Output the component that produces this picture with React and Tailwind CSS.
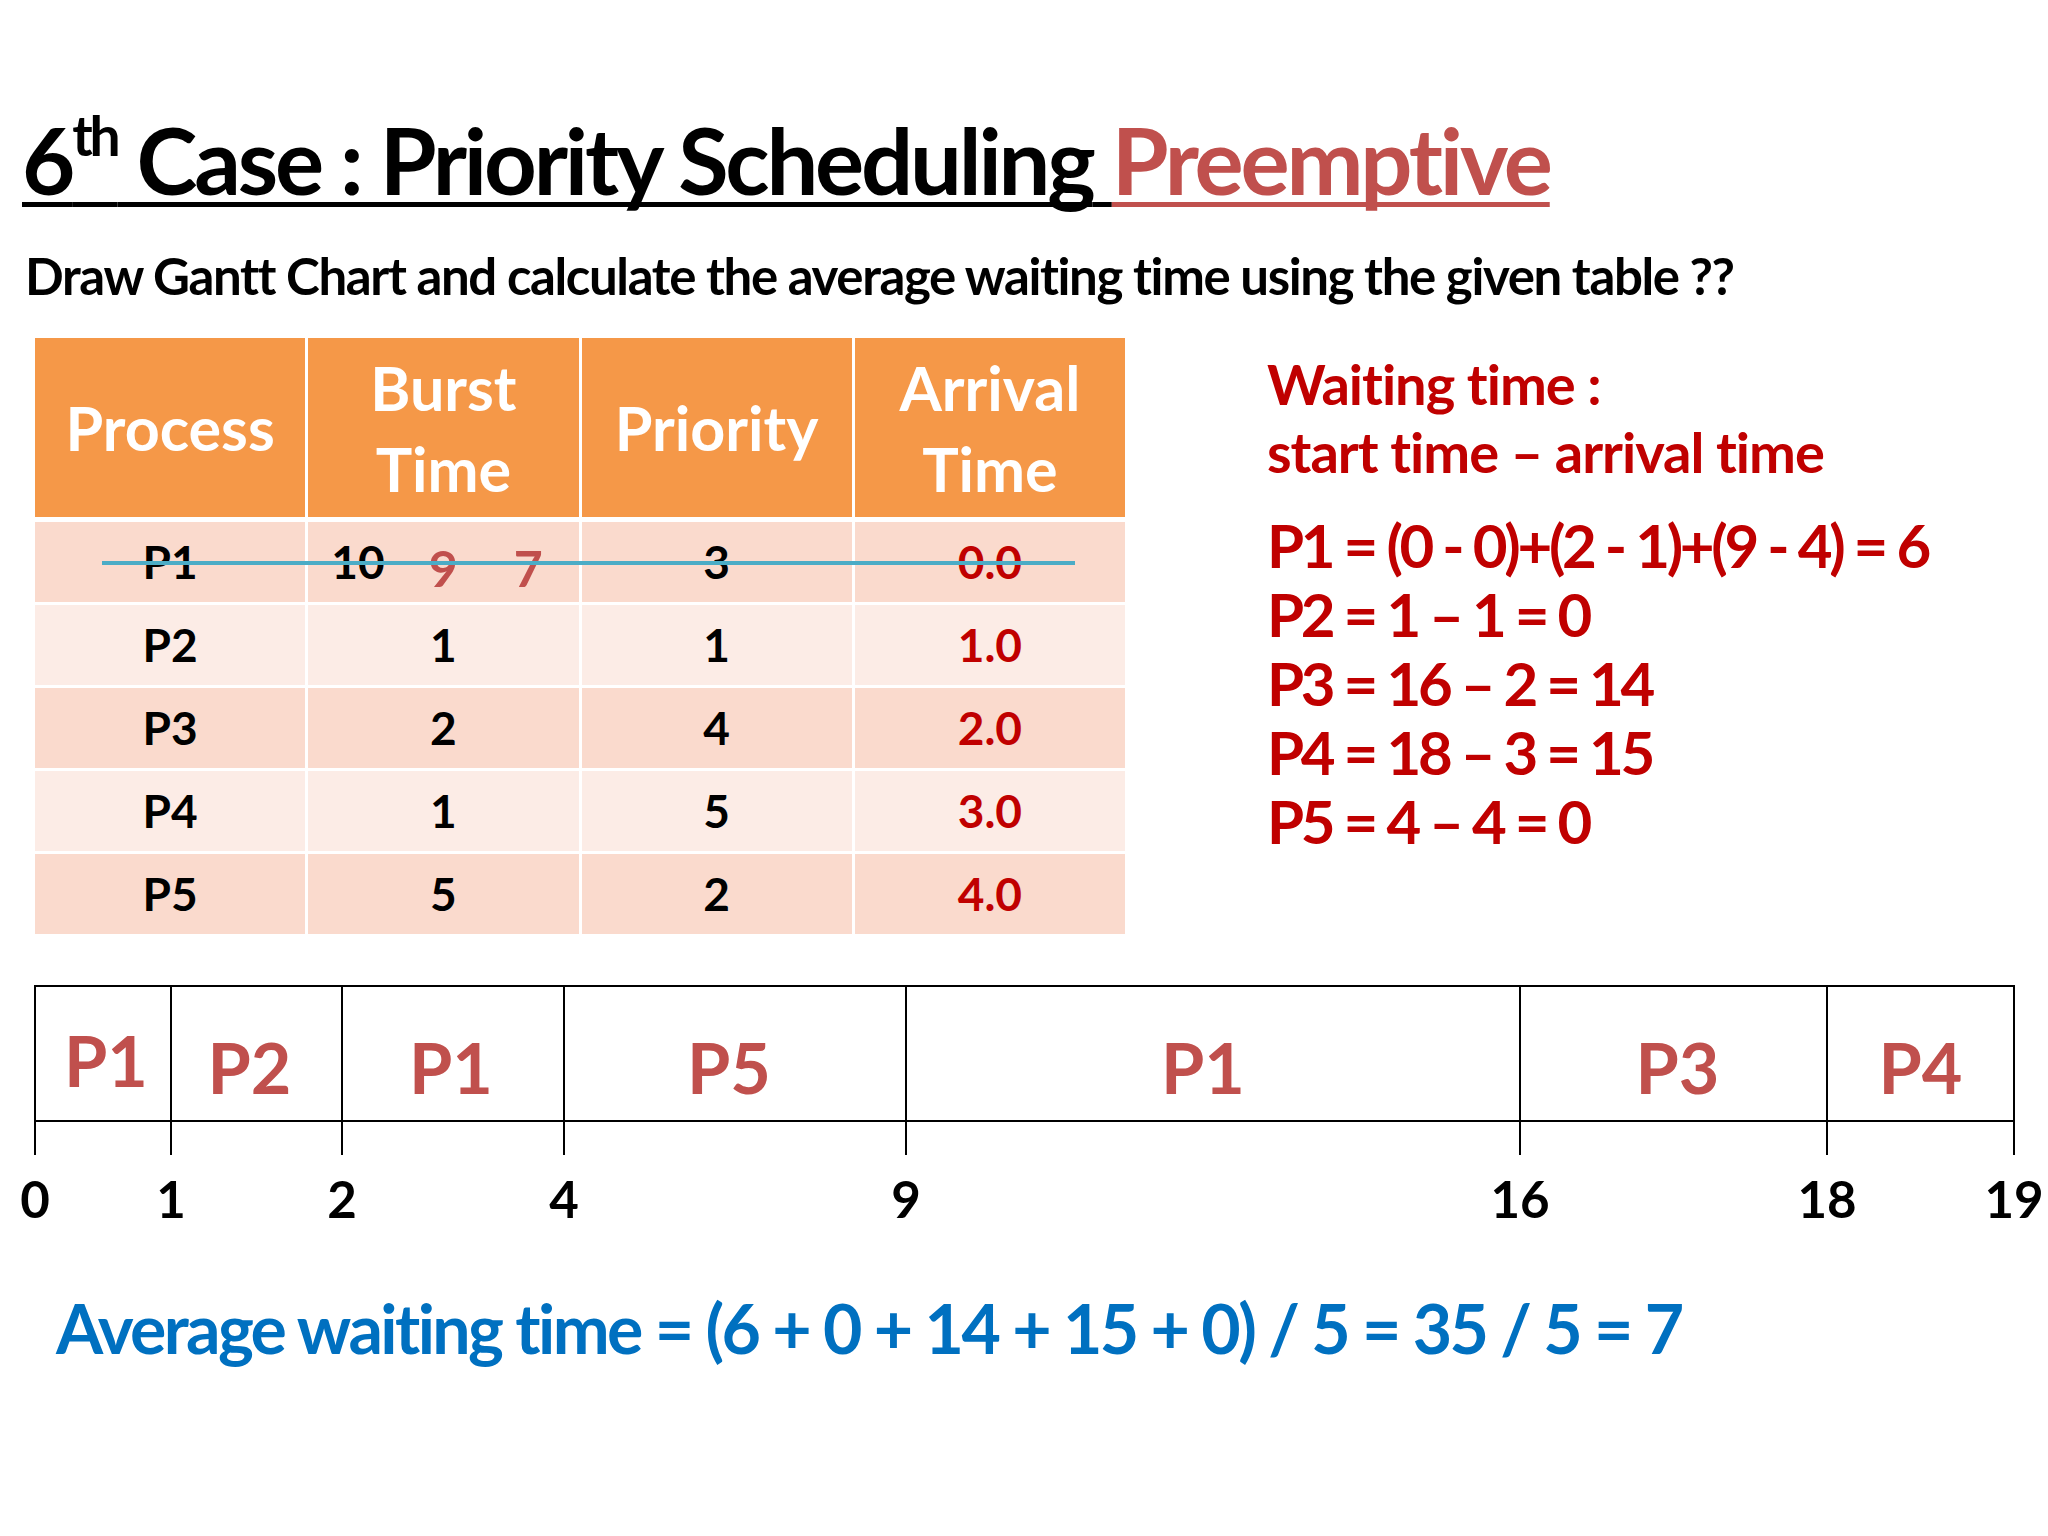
import React from 'react';

const rows = [
  { p: 'P1', burst: '10', pr: '3', at: '0.0', dark: true },
  { p: 'P2', burst: '1', pr: '1', at: '1.0', dark: false },
  { p: 'P3', burst: '2', pr: '4', at: '2.0', dark: true },
  { p: 'P4', burst: '1', pr: '5', at: '3.0', dark: false },
  { p: 'P5', burst: '5', pr: '2', at: '4.0', dark: true },
];

const waits = [
  'P1 = (0 - 0)+(2 - 1)+(9 - 4) = 6',
  'P2 = 1 – 1 = 0',
  'P3 = 16 – 2 = 14',
  'P4 = 18 – 3 = 15',
  'P5 = 4 – 4 = 0',
];

const segments = [
  { name: 'P1', w: 'w-[136px]', start: '0', pad: 'pt-[38px] pl-[6px]' },
  { name: 'P2', w: 'w-[171px]', start: '1', pad: 'pt-[45px] pr-[14px]' },
  { name: 'P1', w: 'w-[222px]', start: '2', pad: 'pt-[45px] pr-[4px]' },
  { name: 'P5', w: 'w-[342px]', start: '4', pad: 'pt-[45px] pr-[12px]' },
  { name: 'P1', w: 'w-[614px]', start: '9', pad: 'pt-[45px] pr-[20px]' },
  { name: 'P3', w: 'w-[307px]', start: '16', pad: 'pt-[45px] pl-[8px]' },
  { name: 'P4', w: 'w-[187px]', start: '18', pad: 'pt-[45px]' },
];

const HeaderCell = ({ children }) => (
  <div className="bg-[#F59848] h-[179px] flex items-center justify-center text-center text-white text-[61px] leading-[81px]">
    {children}
  </div>
);

const App = () => {
  return (
    <div className="w-[2048px] h-[1536px] bg-white overflow-hidden font-bold [font-family:Lato,'Open_Sans',sans-serif] pt-[114px]">
      <h1 className="ml-[22px] text-[92px] leading-none tracking-[-3.2px] text-black whitespace-nowrap">
        <span className="underline decoration-black decoration-[5px] underline-offset-[7px] [text-decoration-skip-ink:none]">
          6<sup className="text-[0.6em] top-[-0.7em]">th</sup> Case : Priority Scheduling{' '}
        </span>
        <span className="text-[#C0504D] underline decoration-[#C0504D] decoration-[5px] underline-offset-[7px] [text-decoration-skip-ink:none]">
          Preemptive
        </span>
      </h1>

      <p className="ml-[25px] mt-[44px] text-[51px] leading-none tracking-[-1.4px] text-black whitespace-nowrap">
        Draw Gantt Chart and calculate the average waiting time using the given table ??
      </p>

      <div className="flex mt-[37px] ml-[35px]">
        <div className="w-[1090px] relative">
          <div className="grid grid-cols-4 gap-x-[3px]">
            <HeaderCell>Process</HeaderCell>
            <HeaderCell>Burst<br />Time</HeaderCell>
            <HeaderCell>Priority</HeaderCell>
            <HeaderCell>Arrival<br />Time</HeaderCell>
          </div>
          <div className="mt-[5px] flex flex-col gap-y-[3px]">
            {rows.map((r, i) => {
              const bg = r.dark ? 'bg-[#FADACD]' : 'bg-[#FCECE6]';
              return (
                <div key={r.p} className="grid grid-cols-4 gap-x-[3px] h-[80px] text-[46px] leading-none text-black">
                  <div className={`${bg} flex items-center justify-center`}>{r.p}</div>
                  {i === 0 ? (
                    <div className={`${bg} flex items-center pl-[23px]`}>
                      <span>10</span>
                      <span className="ml-[44px] text-[50px] text-[#C0504D] translate-y-[6px]">9</span>
                      <span className="ml-[56px] text-[50px] text-[#C0504D] translate-y-[6px]">7</span>
                    </div>
                  ) : (
                    <div className={`${bg} flex items-center justify-center`}>{r.burst}</div>
                  )}
                  <div className={`${bg} flex items-center justify-center`}>{r.pr}</div>
                  <div className={`${bg} flex items-center justify-center text-[#C00000]`}>{r.at}</div>
                </div>
              );
            })}
          </div>
          {/* strike through the first row */}
          <div className="absolute left-[67px] top-[223px] w-[973px] h-[4px] bg-[#4BACC6]" />
        </div>

        <div className="ml-[142px] pt-[12px] text-[#C00000] whitespace-nowrap">
          <div className="text-[56px] leading-[68px] tracking-[-1px]">
            <div>Waiting time :</div>
            <div>start time – arrival time</div>
          </div>
          <div className="mt-[25px] text-[60px] leading-[69px] tracking-[-3.3px]">
            {waits.map(w => (
              <div key={w}>{w}</div>
            ))}
          </div>
        </div>
      </div>

      {/* gantt chart */}
      <div className="ml-[34px] mt-[51px]">
        <div className="flex h-[137px] border-y-2 border-r-2 border-black w-fit">
          {segments.map((s, i) => (
            <div key={i} className={`${s.w} border-l-2 border-black flex justify-center ${s.pad}`}>
              <span className="text-[70px] leading-none text-[#C0504D]">{s.name}</span>
            </div>
          ))}
        </div>
        <div className="flex h-[33px] border-r-2 border-black w-fit">
          {segments.map((s, i) => (
            <div key={i} className={`${s.w} border-l-2 border-black`} />
          ))}
        </div>
        <div className="flex mt-[18px] text-[51px] leading-none text-black">
          {segments.map((s, i) => (
            <div key={i} className={s.w}>
              <div className="w-[2px] flex justify-center">{s.start}</div>
            </div>
          ))}
          <div className="w-[2px] flex justify-center">19</div>
        </div>
      </div>

      <p className="ml-[56px] mt-[70px] text-[68px] leading-none tracking-[-2.6px] text-[#0070C0] whitespace-nowrap">
        Average waiting time = (6 + 0 + 14 + 15 + 0) / 5 = 35 / 5 = 7
      </p>
    </div>
  );
};

export default App;
